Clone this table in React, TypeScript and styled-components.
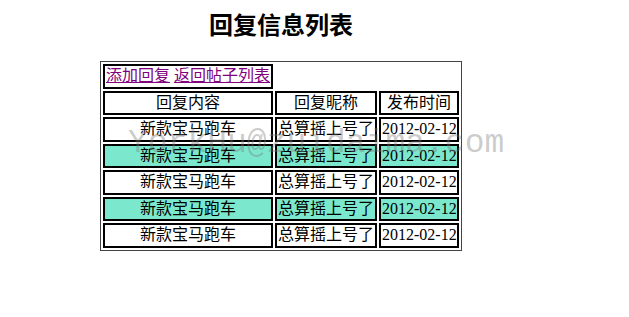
import React from "react";
import styled, { createGlobalStyle } from "styled-components";

const Global = createGlobalStyle`
  html, body { margin: 0; padding: 0; background: #fff; }
  body { font-family: "Liberation Serif", "Noto Sans CJK SC", serif; color: #000; }
`;

const Page = styled.div`
  position: relative;
  width: 629px;
  height: 317px;
  overflow: hidden;
  padding-left: 100px;
  padding-top: 12px;
  box-sizing: border-box;
`;

const Container = styled.div`
  width: 362px;
  display: flex;
  flex-direction: column;
  gap: 21px;
`;

const Title = styled.h2`
  margin: 0;
  font-size: 24px;
  line-height: 28px;
  font-weight: bold;
  text-align: center;
  font-family: "Liberation Serif", "Noto Sans CJK SC", serif;
`;

const Table = styled.table`
  border: 1px solid #444;
  border-collapse: separate;
  border-spacing: 2px;
  width: 362px;
  table-layout: fixed;
  font-size: 16px;
`;

const Cell = styled.td<{ $bg?: string; $align?: string }>`
  border: 2px solid #000;
  padding: 1px;
  line-height: 18.57px;
  text-align: ${(p) => p.$align || "center"};
  background: ${(p) => p.$bg || "#fff"};
  white-space: nowrap;
  overflow: hidden;
  font-family: "Liberation Serif", "Noto Sans CJK SC", serif;
`;

const Link = styled.a`
  color: #800080;
  text-decoration: underline;
  cursor: pointer;
`;

const Watermark = styled.div`
  position: absolute;
  left: 128px;
  top: 124px;
  font-family: "Liberation Mono", "Courier New", monospace;
  font-size: 33px;
  line-height: 40px;
  color: rgba(120, 120, 120, 0.38);
  white-space: nowrap;
  pointer-events: none;
`;

const rows = [0, 1, 2, 3, 4].map((i) => ({
  content: "新款宝马跑车",
  nick: "总算摇上号了",
  time: "2012-02-12",
  alt: i % 2 === 1,
}));

export default function App() {
  return (
    <>
      <Global />
      <Page>
        <Container>
          <Title>回复信息列表</Title>
          <Table>
            <colgroup>
              <col style={{ width: 170 }} />
              <col style={{ width: 102 }} />
              <col style={{ width: 80 }} />
            </colgroup>
            <tbody>
              <tr>
                <Cell $align="left">
                  <Link>添加回复</Link> <Link>返回帖子列表</Link>
                </Cell>
              </tr>
              <tr>
                <Cell>回复内容</Cell>
                <Cell>回复昵称</Cell>
                <Cell>发布时间</Cell>
              </tr>
              {rows.map((r, i) => (
                <tr key={i}>
                  <Cell $bg={r.alt ? "#7be8cd" : undefined}>{r.content}</Cell>
                  <Cell $bg={r.alt ? "#7be8cd" : undefined} $align="left">{r.nick}</Cell>
                  <Cell $bg={r.alt ? "#7be8cd" : undefined} $align="left">{r.time}</Cell>
                </tr>
              ))}
            </tbody>
          </Table>
        </Container>
        <Watermark>YorkHu@zuidaima.com</Watermark>
      </Page>
    </>
  );
}
